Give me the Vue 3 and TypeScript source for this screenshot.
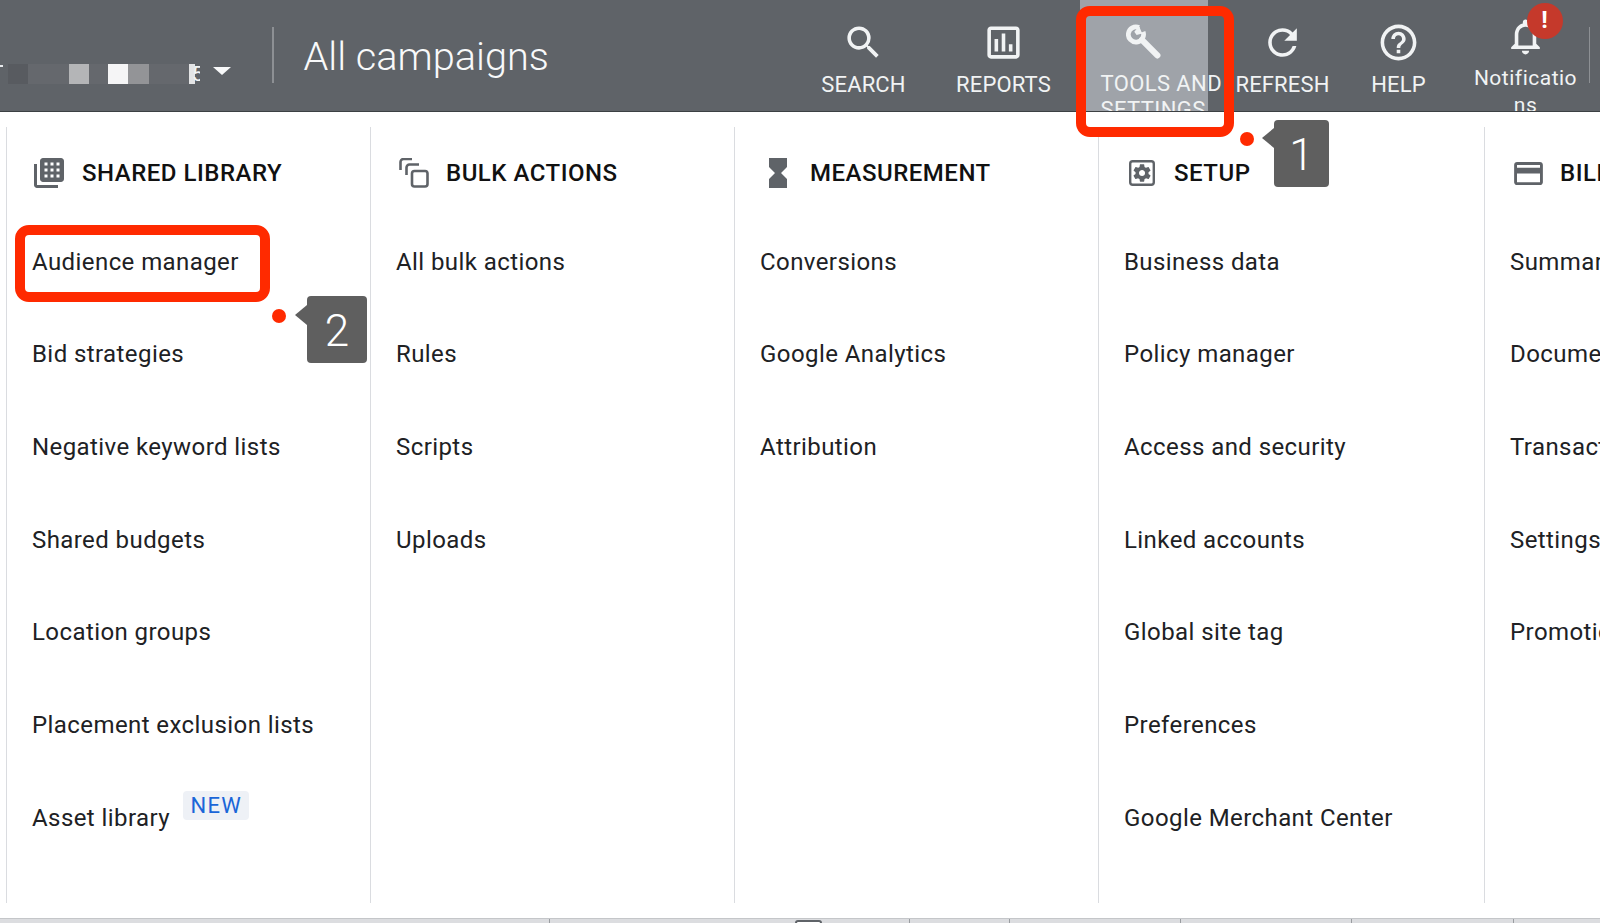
<script setup lang="ts">
type NavIcon = 'search' | 'reports' | 'tools' | 'refresh' | 'help' | 'bell'

interface NavItem {
  key: NavIcon
  label: string
}

interface MenuColumn {
  title: string
  icon: string
  items: string[]
}

const navItems: NavItem[] = [
  { key: 'search', label: 'SEARCH' },
  { key: 'reports', label: 'REPORTS' },
  { key: 'tools', label: 'TOOLS AND SETTINGS' },
  { key: 'refresh', label: 'REFRESH' },
  { key: 'help', label: 'HELP' },
  { key: 'bell', label: 'Notifications' },
]

const navPaths: Record<NavIcon, string> = {
  search: 'M15.5 14h-.79l-.28-.27A6.471 6.471 0 0 0 16 9.5 6.5 6.5 0 1 0 9.5 16c1.61 0 3.09-.59 4.23-1.57l.27.28v.79l5 4.99L20.49 19l-4.99-5zm-6 0C7.01 14 5 11.99 5 9.5S7.01 5 9.5 5 14 7.01 14 9.5 11.99 14 9.5 14z',
  reports: 'M19 3H5c-1.1 0-2 .9-2 2v14c0 1.1.9 2 2 2h14c1.1 0 2-.9 2-2V5c0-1.1-.9-2-2-2zm0 16H5V5h14v14zM7 10h2v7H7zm4-3h2v10h-2zm4 6h2v4h-2z',
  tools: '',
  refresh: 'M17.65 6.35A7.958 7.958 0 0 0 12 4c-4.42 0-7.99 3.58-7.99 8s3.57 8 7.99 8c3.73 0 6.84-2.55 7.73-6h-2.08A5.99 5.99 0 0 1 12 18c-3.31 0-6-2.69-6-6s2.69-6 6-6c1.66 0 3.14.69 4.22 1.78L13 11h7V4l-2.35 2.35z',
  help: 'M11 18h2v-2h-2v2zm1-16C6.48 2 2 6.48 2 12s4.48 10 10 10 10-4.48 10-10S17.52 2 12 2zm0 18c-4.41 0-8-3.59-8-8s3.59-8 8-8 8 3.59 8 8-3.59 8-8 8zm0-14c-2.21 0-4 1.79-4 4h2c0-1.1.9-2 2-2s2 .9 2 2c0 2-3 1.75-3 5h2c0-2.25 3-2.5 3-5 0-2.21-1.79-4-4-4z',
  bell: 'M12 22c1.1 0 2-.9 2-2h-4c0 1.1.9 2 2 2zm6-6v-5c0-3.07-1.63-5.64-4.5-6.32V4c0-.83-.67-1.5-1.5-1.5s-1.5.67-1.5 1.5v.68C7.64 5.36 6 7.92 6 11v5l-2 2v1h16v-1l-2-2zm-2 1H8v-6c0-2.48 1.51-4.5 4-4.5s4 2.02 4 4.5v6z',
}

const columns: MenuColumn[] = [
  {
    title: 'SHARED LIBRARY',
    icon: 'library',
    items: ['Audience manager', 'Bid strategies', 'Negative keyword lists', 'Shared budgets', 'Location groups', 'Placement exclusion lists', 'Asset library'],
  },
  {
    title: 'BULK ACTIONS',
    icon: 'bulk',
    items: ['All bulk actions', 'Rules', 'Scripts', 'Uploads'],
  },
  {
    title: 'MEASUREMENT',
    icon: 'measure',
    items: ['Conversions', 'Google Analytics', 'Attribution'],
  },
  {
    title: 'SETUP',
    icon: 'setup',
    items: ['Business data', 'Policy manager', 'Access and security', 'Linked accounts', 'Global site tag', 'Preferences', 'Google Merchant Center'],
  },
  {
    title: 'BILLING',
    icon: 'billing',
    items: ['Summary', 'Documents', 'Transactions', 'Settings', 'Promotions'],
  },
]

// Tick marks along the cut-off table header under the menu
const stripTicks = [549, 909, 1009, 1180, 1351, 1513]
</script>

<template>
  <div class="page">
    <header class="topbar">
      <div class="account">
        <span class="tick"></span>
        <div class="blur">
          <span class="patch patch-dark"></span>
          <span class="patch patch-soft"></span>
          <span class="patch patch-mid"></span>
          <span class="patch patch-soft patch-gap"></span>
          <span class="patch patch-white"></span>
          <span class="patch patch-grey"></span>
          <span class="patch patch-soft patch-long"></span>
          <span class="patch patch-tail"></span>
          <span class="digit">5</span>
        </div>
        <span class="caret"></span>
      </div>
      <span class="divider title-divider"></span>
      <h1 class="title">All campaigns</h1>
      <nav class="nav">
        <div v-for="item in navItems" :key="item.key" class="nav-item" :class="`nav-${item.key}`">
          <svg v-if="item.key === 'tools'" class="nav-icon" viewBox="0 0 35 35" fill="none" stroke="currentColor">
            <path d="M12.6 3.4A7.4 7.4 0 1 0 16.6 7.6" stroke-width="4.6" />
            <path d="M13 3l-4 4.6 1.6 2.2L15.4 8.4" fill="currentColor" stroke-width="1.5" />
            <path d="M15.5 15.5L30.5 30.5" stroke-width="6" stroke-linecap="round" />
          </svg>
          <svg v-else class="nav-icon" viewBox="0 0 24 24">
            <path :d="navPaths[item.key]" fill="currentColor" />
          </svg>
          <span v-if="item.key === 'bell'" class="alert">!</span>
          <span class="nav-label">{{ item.label }}</span>
        </div>
        <span class="divider nav-divider"></span>
      </nav>
    </header>

    <main class="panel">
      <section v-for="col in columns" :key="col.title" class="column">
        <h2 class="col-head">
          <span class="col-icon">
            <svg v-if="col.icon === 'library'" class="svg-library" viewBox="0 0 24 24">
              <path fill="#5f6368" d="M4 6H2v14c0 1.1.9 2 2 2h14v-2H4V6zm16-4H8c-1.1 0-2 .9-2 2v12c0 1.1.9 2 2 2h12c1.1 0 2-.9 2-2V4c0-1.1-.9-2-2-2z" />
              <path fill="#fff" d="M9 5h2v2H9zm4 0h2v2h-2zm4 0h2v2h-2zM9 9h2v2H9zm4 0h2v2h-2zm4 0h2v2h-2zM9 13h2v2H9zm4 0h2v2h-2zm4 0h2v2h-2z" />
            </svg>
            <svg v-else-if="col.icon === 'bulk'" class="svg-bulk" viewBox="0 0 30 30" fill="none" stroke="#5f6368" stroke-width="2.6">
              <path d="M1.5 12V4a3 3 0 0 1 3-3H13" />
              <path d="M7.5 17V9.5a3 3 0 0 1 3-3H20" />
              <rect x="13" y="13" width="15.5" height="15.5" rx="2.5" />
            </svg>
            <svg v-else-if="col.icon === 'measure'" class="svg-measure" viewBox="0 0 18 30">
              <path fill="#5f6368" d="M0 0h18v9l-6 6 6 6v9H0v-9l6-6-6-6z" />
            </svg>
            <svg v-else-if="col.icon === 'setup'" class="svg-setup" viewBox="0 0 26 26">
              <rect x="1.2" y="1.2" width="23.6" height="23.6" rx="2.5" fill="none" stroke="#5f6368" stroke-width="2.4" />
              <path fill="#5f6368" transform="translate(2.6 2.6) scale(.87)" d="M19.43 12.98c.04-.32.07-.64.07-.98s-.03-.66-.07-.98l2.11-1.65c.19-.15.24-.42.12-.64l-2-3.46c-.12-.22-.39-.3-.61-.22l-2.49 1c-.52-.4-1.08-.73-1.69-.98l-.38-2.65C14.46 2.18 14.25 2 14 2h-4c-.25 0-.46.18-.49.42l-.38 2.65c-.61.25-1.17.59-1.69.98l-2.49-1c-.23-.09-.49 0-.61.22l-2 3.46c-.13.22-.07.49.12.64l2.11 1.65c-.04.32-.07.65-.07.98s.03.66.07.98l-2.11 1.65c-.19.15-.24.42-.12.64l2 3.46c.12.22.39.3.61.22l2.49-1c.52.4 1.08.73 1.69.98l.38 2.65c.03.24.24.42.49.42h4c.25 0 .46-.18.49-.42l.38-2.65c.61-.25 1.17-.59 1.69-.98l2.49 1c.23.09.49 0 .61-.22l2-3.46c.12-.22.07-.49-.12-.64l-2.11-1.65zM12 15.5c-1.93 0-3.5-1.57-3.5-3.5s1.57-3.5 3.5-3.5 3.5 1.57 3.5 3.5-1.57 3.5-3.5 3.5z" />
            </svg>
            <svg v-else class="svg-billing" viewBox="2 4 20 16">
              <path fill="#5f6368" d="M20 4H4c-1.11 0-1.99.89-1.99 2L2 18c0 1.11.89 2 2 2h16c1.11 0 2-.89 2-2V6c0-1.11-.89-2-2-2zm0 14H4v-6h16v6zm0-10H4V6h16v2z" />
            </svg>
          </span>
          {{ col.title }}
        </h2>
        <ul class="col-list">
          <li v-for="entry in col.items" :key="entry" class="col-item">
            {{ entry }}
            <span v-if="entry === 'Asset library'" class="badge-new">NEW</span>
          </li>
        </ul>
      </section>
    </main>

    <footer class="strip">
      <span v-for="x in stripTicks" :key="x" class="strip-tick" :style="{ left: `${x}px` }"></span>
      <span class="strip-icon"></span>
    </footer>

    <!-- Annotations drawn on top of the screenshot -->
    <div class="mark mark-tools"></div>
    <div class="mark mark-audience"></div>
    <span class="dot dot-one"></span>
    <span class="dot dot-two"></span>
    <div class="callout callout-one">1</div>
    <div class="callout callout-two">2</div>
  </div>
</template>

<style>
html,
body {
  margin: 0;
  background: #fff;
}
</style>

<style scoped>
.page {
  position: relative;
  display: flex;
  flex-direction: column;
  width: 1600px;
  height: 923px;
  overflow: hidden;
  background: #fff;
  font-family: Roboto, "Liberation Sans", sans-serif;
  color: #202124;
}

.topbar {
  position: relative;
  display: flex;
  align-items: flex-start;
  flex: none;
  height: 112px;
  box-sizing: border-box;
  border-bottom: 1px solid #3c4043;
  overflow: hidden;
  background: #5f6368;
  color: #f1f3f4;
}

.account {
  display: flex;
  align-items: flex-start;
  flex: none;
  width: 272px;
  height: 84px;
  padding-top: 64px;
  box-sizing: border-box;
}

.tick {
  width: 3px;
  height: 2px;
  margin: 1px 5px 0 0;
  background: #e8eaed;
}

.blur {
  display: flex;
  height: 20px;
}

.patch {
  height: 20px;
}

.patch-dark {
  width: 20px;
  background: #585b60;
}

.patch-soft {
  width: 41px;
  background: #65686d;
}

.patch-gap {
  width: 19px;
}

.patch-long {
  width: 40px;
}

.patch-mid {
  width: 20px;
  background: #b4b5b7;
}

.patch-white {
  width: 20px;
  background: #f5f5f6;
}

.patch-grey {
  width: 21px;
  background: #939497;
}

.patch-tail {
  width: 6px;
  background: #e3e4e5;
}

.digit {
  width: 8px;
  margin-left: -3px;
  font-size: 21px;
  line-height: 20px;
  overflow: hidden;
}

.caret {
  width: 0;
  height: 0;
  margin: 3px 0 0 13px;
  border-left: 9px solid transparent;
  border-right: 9px solid transparent;
  border-top: 8px solid #f8f9fa;
}

.divider {
  flex: none;
  width: 1.5px;
  height: 56px;
  margin-top: 27px;
  background: #8d9094;
}

.title {
  margin: 34px 0 0 30px;
  font-size: 39.7px;
  line-height: 46px;
  font-weight: 300;
  color: #f8f9fa;
  white-space: nowrap;
}

.nav {
  display: flex;
  margin-left: auto;
  height: 112px;
}

.nav-item {
  position: relative;
  display: flex;
  flex: none;
  flex-direction: column;
  align-items: center;
  width: 140px;
  padding-top: 21px;
  box-sizing: border-box;
}

.nav-icon {
  display: block;
  flex: none;
  width: 43px;
  height: 43px;
}

.nav-label {
  margin-top: 7px;
  font-size: 22px;
  line-height: 27px;
  letter-spacing: 0.15px;
  text-align: center;
  white-space: nowrap;
}

.nav-tools {
  width: 128px;
  margin-left: 6px;
  background: #9fa3a9;
}

.nav-tools .nav-icon {
  width: 36px;
  height: 36px;
  margin: 3px 0 4px;
}

.nav-tools .nav-label {
  align-self: flex-start;
  width: 125px;
  margin-left: 21px;
  line-height: 26px;
  letter-spacing: 0.4px;
  text-align: left;
  white-space: normal;
}

.nav-refresh {
  width: 150px;
}

.nav-help {
  width: 82px;
}

.nav-bell {
  width: 110px;
  margin-left: 31px;
  padding-top: 15px;
}

.nav-bell .nav-label {
  width: 110px;
  font-size: 21px;
  letter-spacing: 0.5px;
  white-space: normal;
  word-break: break-all;
}

.alert {
  position: absolute;
  top: 3px;
  left: 56px;
  width: 36px;
  height: 36px;
  border-radius: 50%;
  background: #c5392b;
  color: #fff;
  font-size: 24px;
  font-weight: 700;
  line-height: 34px;
  text-align: center;
}

.nav-divider {
  margin-left: 8px;
  margin-right: 10px;
}

.panel {
  display: grid;
  grid-template-columns: 364px 364px 364px 386px 1fr;
  flex: none;
  height: 806px;
  box-sizing: border-box;
  padding: 15px 0 15px 6px;
}

.column {
  min-width: 0;
  box-sizing: border-box;
  padding-left: 25px;
  border-left: 1.5px solid #dadce0;
  white-space: nowrap;
}

.col-head {
  display: flex;
  align-items: center;
  height: 30px;
  margin: 31px 0 27.5px;
  font-size: 24px;
  line-height: 30px;
  font-weight: 500;
  letter-spacing: 0.5px;
  color: #111;
}

.col-icon {
  display: flex;
  flex: none;
  align-items: center;
  justify-content: center;
  width: 36px;
  height: 30px;
  margin-right: 14px;
}

.svg-library {
  width: 36px;
  height: 36px;
  margin-left: -2px;
}

.svg-bulk {
  width: 30px;
  height: 30px;
}

.svg-measure {
  width: 18px;
  height: 30px;
}

.svg-setup {
  width: 26px;
  height: 26px;
}

.svg-billing {
  width: 29px;
  height: 23px;
}

.col-list {
  margin: 0;
  padding: 0;
  list-style: none;
}

.col-item {
  position: relative;
  height: 92.7px;
  font-size: 24px;
  line-height: 92.7px;
  letter-spacing: 0.42px;
  color: #202124;
}

.badge-new {
  display: inline-block;
  position: relative;
  top: -13px;
  height: 29px;
  margin-left: 7px;
  padding: 0 7px;
  border-radius: 4px;
  background: #eef1f6;
  color: #1a66d8;
  font-size: 22px;
  line-height: 29px;
  letter-spacing: 1.4px;
  vertical-align: baseline;
}

.strip {
  position: relative;
  flex: 1;
  border-top: 1px solid #c4c6c9;
  background: #dcdde0;
}

.strip-tick {
  position: absolute;
  top: 0;
  width: 1px;
  height: 5px;
  background: #9a9da1;
}

.strip-icon {
  position: absolute;
  top: 1px;
  left: 795px;
  width: 23px;
  height: 8px;
  border: 2px solid #5f6368;
  border-radius: 3px;
  background: #fff;
}

.mark {
  position: absolute;
  box-sizing: border-box;
  border: 10px solid #ff2a00;
  border-radius: 14px;
}

.mark-tools {
  top: 6px;
  left: 1076px;
  width: 158px;
  height: 131px;
}

.mark-audience {
  top: 225px;
  left: 15px;
  width: 255px;
  height: 77px;
}

.dot {
  position: absolute;
  width: 14px;
  height: 14px;
  border-radius: 50%;
  background: #ff2a00;
}

.dot-one {
  top: 132px;
  left: 1240px;
}

.dot-two {
  top: 309px;
  left: 272px;
}

.callout {
  position: absolute;
  display: flex;
  align-items: center;
  justify-content: center;
  box-sizing: border-box;
  padding-top: 3px;
  border-radius: 4px;
  background: #5f5f5f;
  color: #fff;
  font-size: 44px;
  font-weight: 300;
}

.callout::before {
  content: '';
  position: absolute;
  left: -12px;
  border-top: 10px solid transparent;
  border-bottom: 10px solid transparent;
  border-right: 12px solid #5f5f5f;
}

.callout-one {
  top: 120px;
  left: 1274px;
  width: 55px;
  height: 67px;
}

.callout-one::before {
  top: 8px;
}

.callout-two {
  top: 296px;
  left: 307px;
  width: 60px;
  height: 67px;
}

.callout-two::before {
  top: 9px;
}
</style>
